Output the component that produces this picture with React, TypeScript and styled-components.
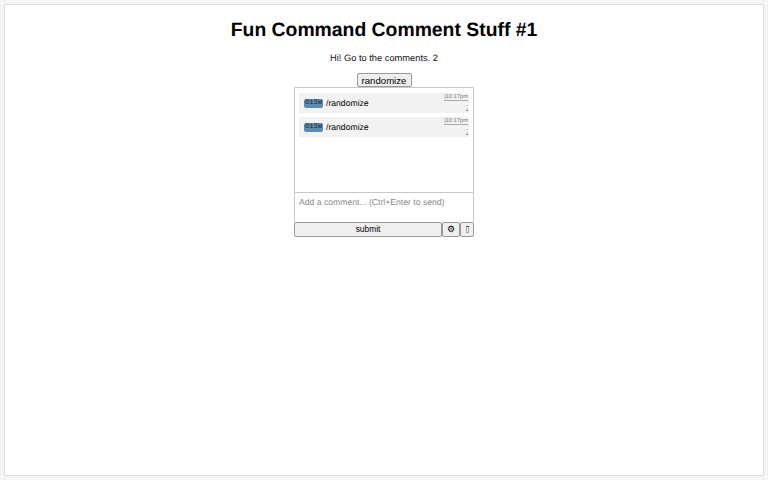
import React from 'react';
import styled, { createGlobalStyle } from 'styled-components';

const Global = createGlobalStyle`
    html, body {
        margin: 0;
        height: 100%;
        background: #f5f5f5;
        font-family: "Liberation Sans", Arial, sans-serif;
        text-rendering: geometricPrecision;
    }
`;

const Page = styled.div`
    box-sizing: border-box;
    width: 768px;
    height: 480px;
    padding: 4px;
`;

const Card = styled.main`
    box-sizing: border-box;
    height: 472px;
    background: #fff;
    border: 1px solid #dcdcdc;
    display: flex;
    flex-direction: column;
    align-items: center;
`;

const Title = styled.h1`
    margin: 12px 0 0;
    font-size: 19.36px;
    line-height: 26px;
    font-weight: 700;
    color: #000;
`;

const Intro = styled.p`
    margin: 9px 0 0;
    font-size: 9.3px;
    line-height: 13px;
    color: #111;
`;

const Button = styled.button`
    box-sizing: border-box;
    margin: 0;
    padding: 0;
    font-family: inherit;
    color: #000;
    background: #efefef;
    border: 1px solid #999;
    border-radius: 2px;
`;

const RandomizeButton = styled(Button)`
    margin-top: 8px;
    padding-top: 1px;
    width: 55px;
    height: 14px;
    font-size: 9.6px;
    line-height: 12px;
`;

const Comments = styled.section`
    box-sizing: border-box;
    width: 180px;
    border: 1px solid #c8c8c8;
    border-bottom: 0;
    display: flex;
    flex-direction: column;
`;

const CommentList = styled.div`
    height: 105px;
    padding: 5px 4px 0;
    box-sizing: border-box;
    display: flex;
    flex-direction: column;
    gap: 4px;
    border-bottom: 1px solid #c8c8c8;
`;

const Comment = styled.div`
    height: 20px;
    background: #f2f2f2;
    display: flex;
    align-items: center;
    padding: 0 1px 0 5px;
`;

const Badge = styled.span`
    box-sizing: border-box;
    margin-top: 1px;
    width: 19px;
    height: 9px;
    background: #5b8db3;
    border-radius: 2px;
    color: #1c2e40;
    font-family: "Liberation Mono", monospace;
    font-size: 7px;
    line-height: 9px;
    text-align: center;
`;

const Body = styled.span`
    margin-left: 3px;
    font-size: 8.64px;
    color: #000;
    flex: 1;
`;

const Meta = styled.div`
    display: flex;
    flex-direction: column;
    align-items: flex-end;
    align-self: flex-start;
    margin-top: 1px;
    font-size: 5.76px;
    line-height: 6px;
    color: #777;
`;

const Time = styled.span`
    border-bottom: 1px solid #aaa;
`;

const Dots = styled.span`
    margin-top: 3px;
    font-size: 7px;
    line-height: 7px;
    color: #777;
    text-decoration: underline;
`;

const Input = styled.div`
    box-sizing: border-box;
    height: 29px;
    padding: 4px 4px 0;
    font-size: 8.64px;
    line-height: 11px;
    color: #8a8a8a;
`;

const Actions = styled.div`
    width: 180px;
    height: 15px;
    display: flex;
`;

const ActionButton = styled(Button)<{ $width: number; $size?: number }>`
    display: flex;
    align-items: center;
    justify-content: center;
    width: ${p => p.$width}px;
    height: 15px;
    font-size: ${p => p.$size ?? 8.4}px;
    font-weight: 400;
    line-height: 13px;
`;

const PhoneIcon = () => (
    <svg width='3' height='7' viewBox='0 0 3 7'>
        <rect x='0.5' y='0.5' width='2' height='6' fill='none' stroke='#aaa' />
        <path d='M0 0.5h3' stroke='#444' />
    </svg>
);

export default function App() {
    return (
        <Page>
            <Global />
            <Card>
                <Title>Fun Command Comment Stuff #1</Title>
                <Intro>Hi! Go to the comments. 2</Intro>
                <RandomizeButton>randomize</RandomizeButton>
                <Comments>
                    <CommentList>
                        {[0, 1].map(i => (
                            <Comment key={i}>
                                <Badge>01SW</Badge>
                                <Body>/randomize</Body>
                                <Meta>
                                    <Time>|10:17pm</Time>
                                    <Dots>:</Dots>
                                </Meta>
                            </Comment>
                        ))}
                    </CommentList>
                    <Input>Add a comment... (Ctrl+Enter to send)</Input>
                </Comments>
                <Actions>
                    <ActionButton $width={148}>submit</ActionButton>
                    <ActionButton $width={18} $size={9}>⚙</ActionButton>
                    <ActionButton $width={14}><PhoneIcon /></ActionButton>
                </Actions>
            </Card>
        </Page>
    );
}
